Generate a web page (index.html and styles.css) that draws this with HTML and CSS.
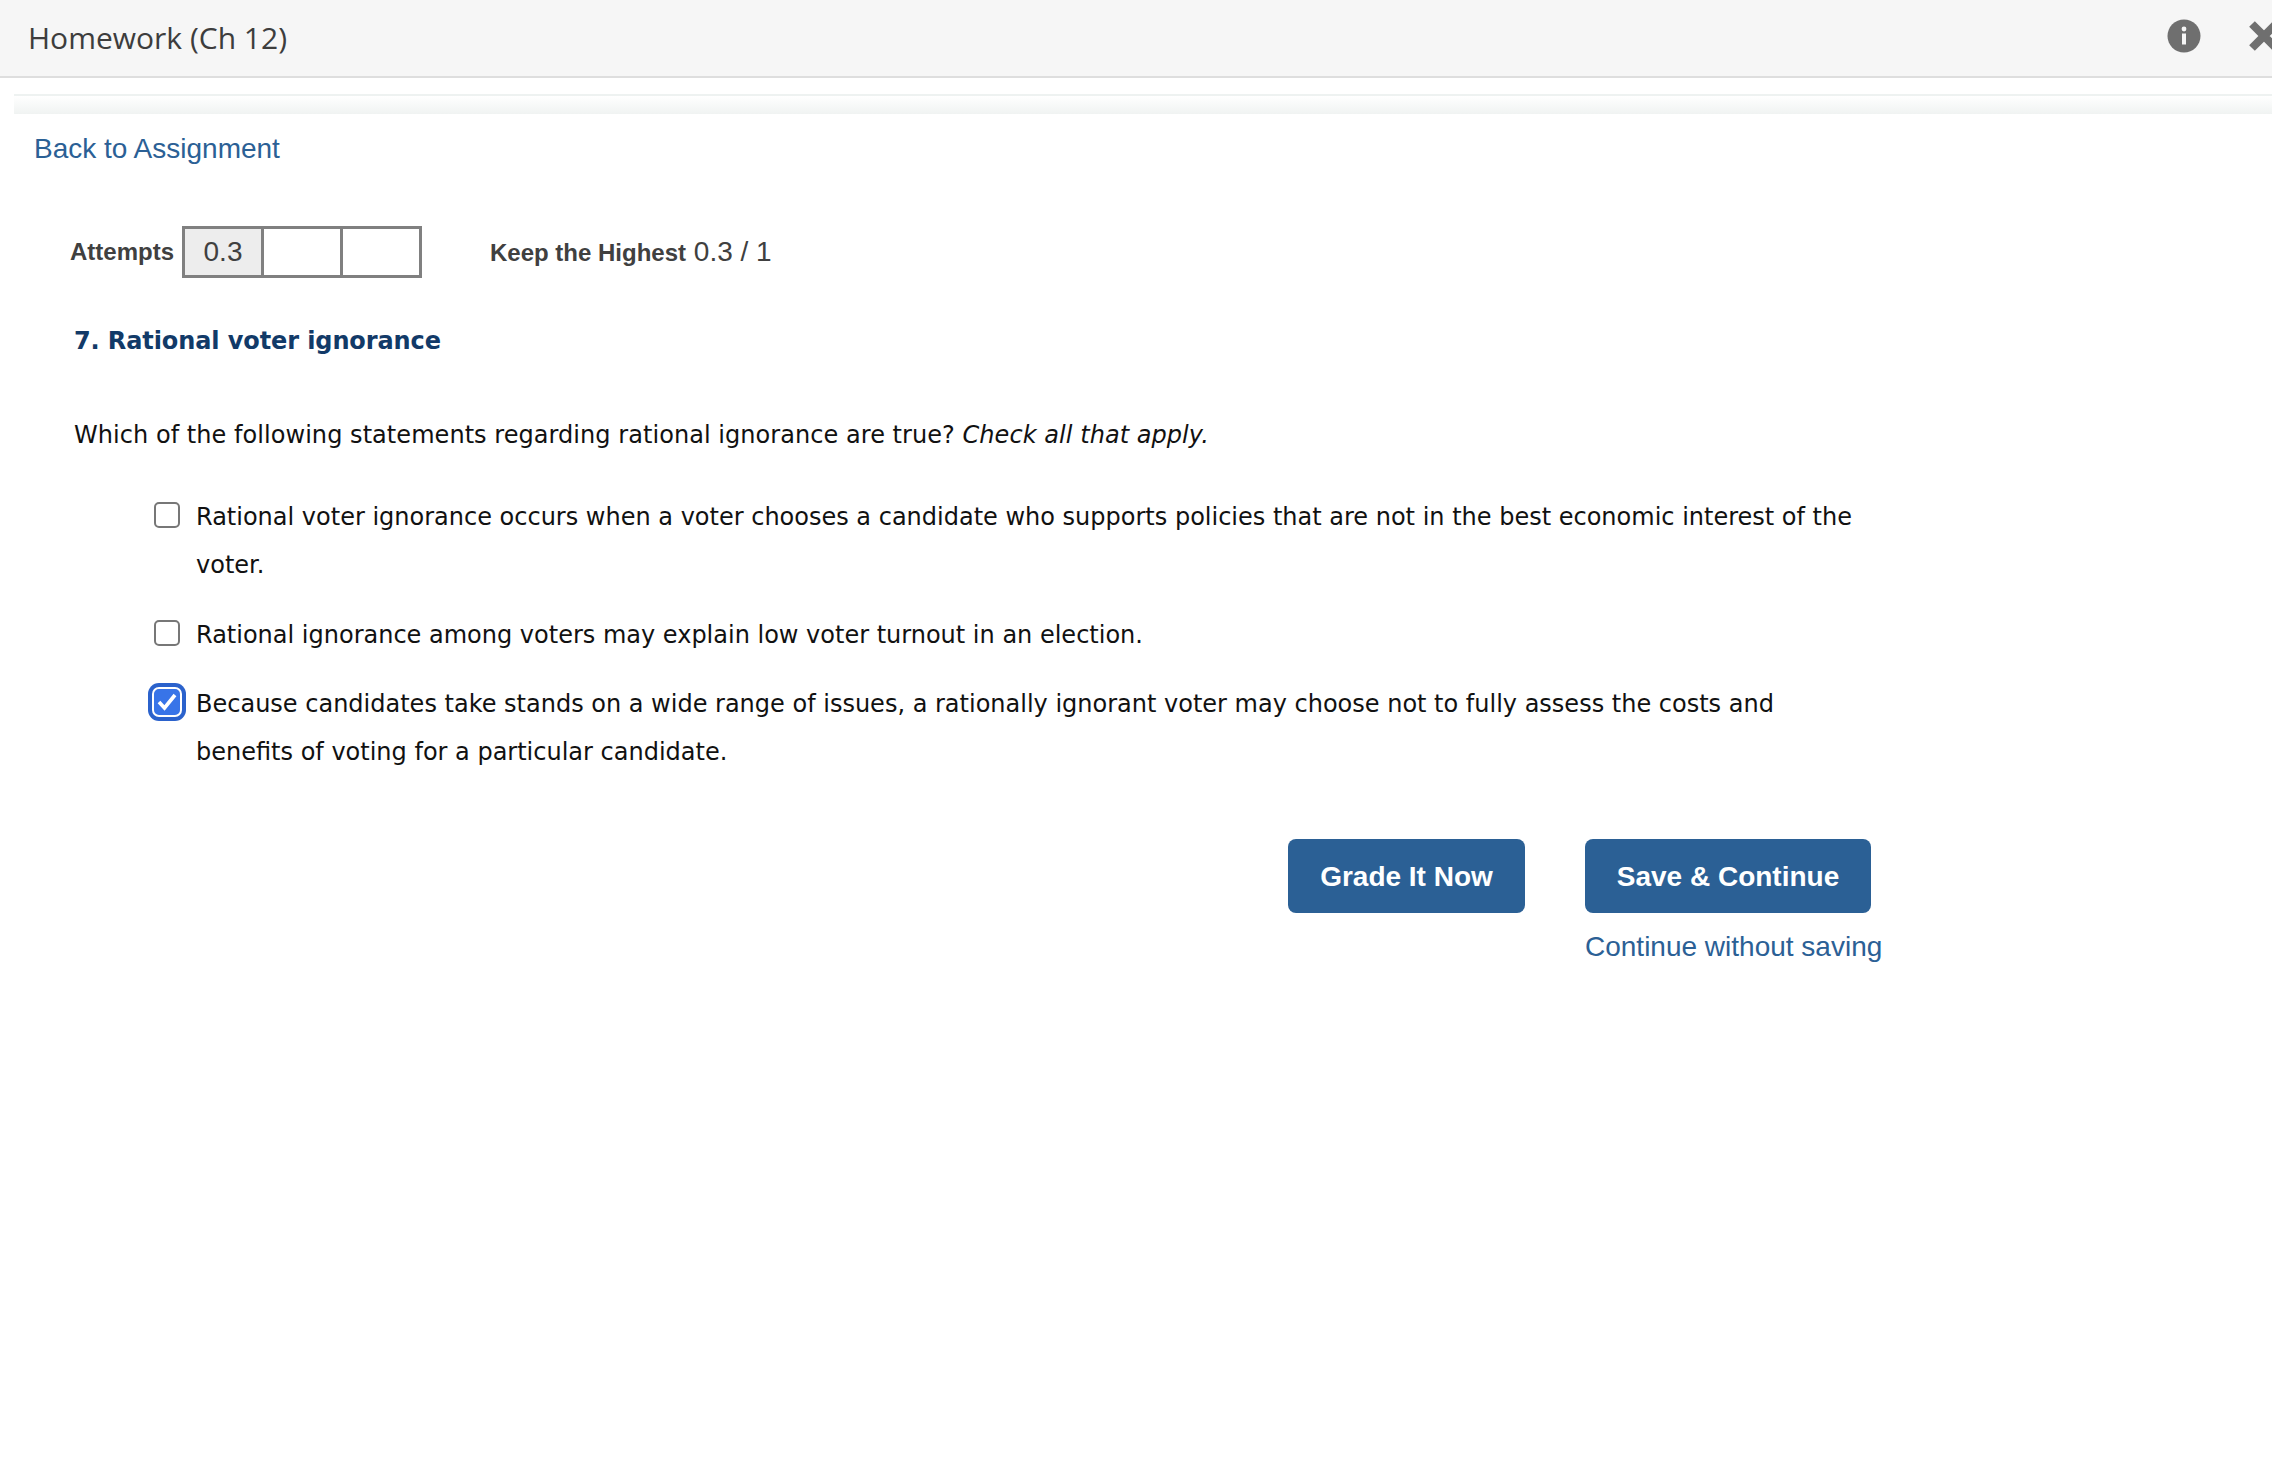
FILE: index.html
```html
<!DOCTYPE html>
<html lang="en">
<head>
    <meta charset="UTF-8">
    <meta name="viewport" content="width=device-width, initial-scale=1.0">
    <title>Homework (Ch 12)</title>
    <link rel="stylesheet" href="styles.css">
</head>
<body>
    <header class="top-bar">
        <h1 class="top-title">Homework (Ch 12)</h1>
        <div class="top-icons">
            <svg class="icon-info" width="34" height="34" viewBox="0 0 34 34">
                <circle cx="17" cy="17" r="16.5" fill="#6f6f6f"/>
                <circle cx="17" cy="10" r="2.4" fill="#f6f6f6"/>
                <rect x="15" y="14.5" width="4" height="11" fill="#f6f6f6"/>
            </svg>
            <svg class="icon-close" width="30" height="32" viewBox="0 0 30 32">
                <path d="M3 4 L27 28 M27 4 L3 28" stroke="#6f6f6f" stroke-width="8" fill="none"/>
            </svg>
        </div>
    </header>
    <div class="band"></div>

    <main class="content">
        <a class="back-link" href="#">Back to Assignment</a>

        <div class="attempts">
            <span class="attempts-label">Attempts</span>
            <div class="attempt-boxes">
                <div class="attempt-box used">0.3</div>
                <div class="attempt-box"></div>
                <div class="attempt-box"></div>
            </div>
            <span class="keep"><b>Keep the Highest</b> 0.3 / 1</span>
        </div>

        <h2 class="question-title">7. Rational voter ignorance</h2>
        <p class="question">Which of the following statements regarding rational ignorance are true? <em>Check all that apply.</em></p>

        <ul class="options">
            <li class="option">
                <span class="check"></span>
                <span class="option-text">Rational voter ignorance occurs when a voter chooses a candidate who supports policies that are not in the best economic interest of the voter.</span>
            </li>
            <li class="option">
                <span class="check"></span>
                <span class="option-text">Rational ignorance among voters may explain low voter turnout in an election.</span>
            </li>
            <li class="option">
                <span class="check checked">
                    <svg width="20" height="20" viewBox="0 0 20 20">
                        <path d="M2 10 L7.5 16 L18 3" stroke="#fff" stroke-width="3.6" fill="none"/>
                    </svg>
                </span>
                <span class="option-text">Because candidates take stands on a wide range of issues, a rationally ignorant voter may choose not to fully assess the costs and benefits of voting for a particular candidate.</span>
            </li>
        </ul>

        <div class="actions">
            <button class="btn btn-grade">Grade It Now</button>
            <div class="save-group">
                <button class="btn btn-save">Save &amp; Continue</button>
                <a class="skip-link" href="#">Continue without saving</a>
            </div>
        </div>
    </main>
</body>
</html>
```

FILE: styles.css
```css
body {
    margin: 0;
    background-color: #fff;
    font-family: 'Liberation Sans', Arial, sans-serif;
    overflow: hidden;
}

.top-bar {
    display: flex;
    justify-content: space-between;
    align-items: center;
    height: 76px;
    background-color: #f6f6f6;
    border-bottom: 2px solid #dedede;
    padding-left: 28px;
}

.top-title {
    margin: -2px 0 0;
    font-family: 'Open Sans', sans-serif;
    font-size: 30px;
    font-weight: 400;
    color: #3d3d3d;
}

.top-icons {
    display: flex;
    align-items: center;
    gap: 48px;
    margin-right: -7px;
    margin-top: -5px;
}

.icon-info, .icon-close {
    display: block;
}

.band {
    height: 18px;
    margin: 16px 0 0 14px;
    border-top: 2px solid #eef2f1;
    background: linear-gradient(to bottom, #fff, #f0f3f2);
}

.content {
    padding: 0 0 0 34px;
}

a {
    color: #2b6095;
    text-decoration: none;
}

.back-link {
    display: block;
    margin-top: 17px;
    font-size: 28px;
    line-height: 36px;
}

.attempts {
    display: flex;
    align-items: center;
    margin: 59px 0 0 36px;
}

.attempts-label {
    font-size: 24px;
    font-weight: bold;
    color: #404040;
    margin-right: 8px;
}

.attempt-boxes {
    display: flex;
}

.attempt-box {
    width: 76px;
    height: 46px;
    margin-left: -3px;
    border: 3px solid #808080;
    font-size: 28px;
    line-height: 46px;
    text-align: center;
    color: #404040;
}

.attempt-box:first-child {
    margin-left: 0;
    background-color: #ededed;
}

.keep {
    margin-left: 68px;
    font-size: 28px;
    color: #404040;
}

.keep b {
    font-size: 24px;
}

.question-title {
    margin: 47px 0 0 40px;
    font-family: 'DejaVu Sans', Verdana, sans-serif;
    font-size: 24px;
    line-height: 32px;
    font-weight: bold;
    letter-spacing: -0.1px;
    color: #123a68;
}

.question {
    margin: 62px 0 0 40px;
    font-family: 'DejaVu Sans', Verdana, sans-serif;
    font-size: 24px;
    line-height: 32px;
    letter-spacing: 0.05px;
    color: #111;
}

.options {
    list-style: none;
    margin: 42px 0 0 0;
    padding: 0 0 0 120px;
    width: 1711px;
}

.option {
    display: flex;
    margin-bottom: 21.5px;
    font-family: 'DejaVu Sans', Verdana, sans-serif;
    font-size: 24px;
    line-height: 48px;
    color: #111;
}

.check {
    flex: none;
    box-sizing: border-box;
    width: 26px;
    height: 26px;
    margin: 9px 16px 0 0;
    background-color: #fff;
    border: 2px solid #777;
    border-radius: 5px;
}

.check.checked {
    display: flex;
    align-items: center;
    justify-content: center;
    background-color: #3874e8;
    border-color: #3874e8;
    outline: 2px solid #fff;
    outline-offset: 0;
    box-shadow: 0 0 0 6px #2b62cc;
}

.actions {
    display: flex;
    align-items: flex-start;
    margin: 63px 0 0 1254px;
    gap: 60px;
}

.btn {
    height: 74px;
    border: none;
    border-radius: 8px;
    background-color: #2b6095;
    color: #fff;
    font-family: 'Liberation Sans', Arial, sans-serif;
    font-size: 28px;
    font-weight: bold;
    padding: 2px 0 0;
}

.btn-grade {
    width: 237px;
}

.btn-save {
    width: 286px;
}

.save-group {
    display: flex;
    flex-direction: column;
    align-items: flex-start;
}

.skip-link {
    margin-top: 18px;
    font-size: 28px;
    line-height: 32px;
}
```
